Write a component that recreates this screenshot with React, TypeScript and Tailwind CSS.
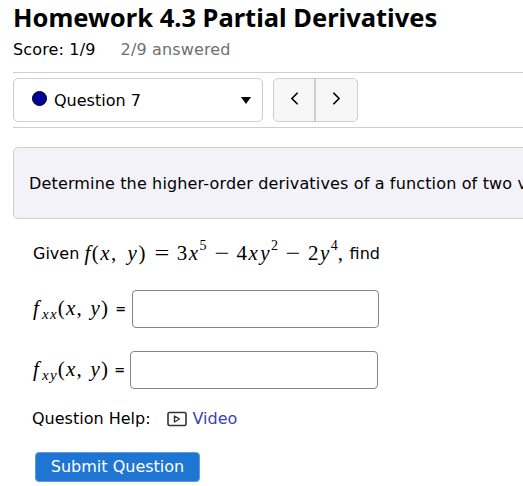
import { ChevronLeft, ChevronRight } from 'lucide-react'

const ui = 'font-["DejaVu_Sans",sans-serif]'
const math = 'font-["Liberation_Serif",serif]'

function Sup({ children }: { children: string }) {
  return <span className="text-[14px] not-italic relative -top-[10px] tracking-normal">{children}</span>
}

function Op({ children }: { children: string }) {
  return <span className="inline-block scale-x-125 ml-[9px] mr-[9px] tracking-normal">{children}</span>
}

function Func({ sub }: { sub: string }) {
  return (
    <span className={`${math} text-[21px] text-black tracking-[1.2px] whitespace-nowrap`}>
      <i>f</i>
      <span className="text-[15px] italic relative top-[4px] ml-[2px]">{sub}</span>
      (<i>x</i>, <i className="ml-[1px]">y</i>)
    </span>
  )
}

export default function App() {
  return (
    <div className={`${ui} w-[523px] h-[486px] overflow-hidden bg-white text-black`}>
      <div className="w-[700px] pl-[13px]">
        {/* Header */}
        <h1 className='font-["Noto_Sans",sans-serif] text-[25.5px] leading-[34px] font-bold whitespace-nowrap'>Homework 4.3 Partial Derivatives</h1>
        <div className="flex gap-[25px] text-[16px] leading-[22px] mt-[5px] tracking-[0.15px]">
          <span>Score: 1/9</span>
          <span className="text-[#6f6f6f]">2/9 answered</span>
        </div>
        <div className="w-[510px] border-t border-[#cfcfcf] mt-[11px]" />

        {/* Question picker */}
        <div className="flex gap-[10px] mt-[5px]">
          <div className="w-[250px] h-[44px] border border-[#cfcfcf] rounded-[5px] flex items-center pl-[18px] pr-[11px]">
            <span className="w-[15px] h-[15px] rounded-full bg-[#00009e] border border-black shrink-0 mb-[3px]" />
            <span className="ml-[7px] text-[16px] flex-1 pt-[2px]">Question 7</span>
            <span className="w-0 h-0 border-x-[5px] border-x-transparent border-t-[7px] border-t-black" />
          </div>
          <div className="flex h-[44px] border border-[#cfcfcf] rounded-[5px] bg-[#f7f7f7] overflow-hidden">
            <button className="w-[42px] flex items-center justify-center border-r-2 border-[#cfcfcf] pb-[4px]">
              <ChevronLeft size={21} strokeWidth={2} />
            </button>
            <button className="w-[41px] flex items-center justify-center pb-[4px]">
              <ChevronRight size={21} strokeWidth={2} />
            </button>
          </div>
        </div>
        <div className="w-[510px] border-t border-[#cfcfcf] mt-[5px]" />

        {/* Description */}
        <div className="mt-[19px] h-[72px] bg-[#f2f2f8] border border-[#cfcfcf] rounded-[5px] flex items-center pl-[15px] pt-[2px] text-[16px] tracking-[0.15px] whitespace-nowrap">
          Determine the higher-order derivatives of a function of two variables.
        </div>

        {/* Question */}
        <div className="pl-[20px] mt-[21px] h-[28px] flex items-center text-[16px] whitespace-nowrap">
          <span>Given&nbsp;</span>
          <span className={`${math} text-[21px] tracking-[1.5px]`}>
            <i>f</i>(<i>x</i>, <i className="ml-[3px]">y</i>)<Op>=</Op>3<i>x</i><Sup>5</Sup><Op>−</Op>4<i>x</i><i className="ml-[1px]">y</i><Sup>2</Sup><Op>−</Op>2<i>y</i><Sup>4</Sup>,
          </span>
          <span>&nbsp;find</span>
        </div>

        <div className="pl-[20px] mt-[22px] flex items-center h-[38px]">
          <Func sub="xx" />
          <span className="text-[13px] font-bold ml-[6px] mr-[6px]">=</span>
          <input className="w-[247px] h-[38px] border border-[#858585] rounded-[4px] bg-white" />
        </div>

        <div className="pl-[20px] mt-[23px] flex items-center h-[38px]">
          <Func sub="xy" />
          <span className="text-[13px] font-bold ml-[5px] mr-[5px]">=</span>
          <input className="w-[248px] h-[38px] border border-[#858585] rounded-[4px] bg-white" />
        </div>

        <div className="pl-[19px] mt-[18px] flex items-center h-[24px] text-[16px]">
          <span>Question Help:</span>
          <svg className="ml-[16px]" width="20" height="16" viewBox="0 0 20 16" fill="none">
            <rect x="1" y="1.5" width="18" height="13" rx="1.5" stroke="#333" strokeWidth="1.6" />
            <path d="M7.5 5v6l5-3z" stroke="#333" strokeWidth="1.4" strokeLinejoin="round" />
          </svg>
          <span className="ml-[6px] text-[#4040b0]">Video</span>
        </div>

        <div className="pl-[22px] mt-[21px]">
          <button className="w-[165px] h-[30px] rounded-[4px] bg-[#1f76d2] border border-[#5b9be0] text-white text-[16px] font-medium">
            Submit Question
          </button>
        </div>
      </div>
    </div>
  )
}
